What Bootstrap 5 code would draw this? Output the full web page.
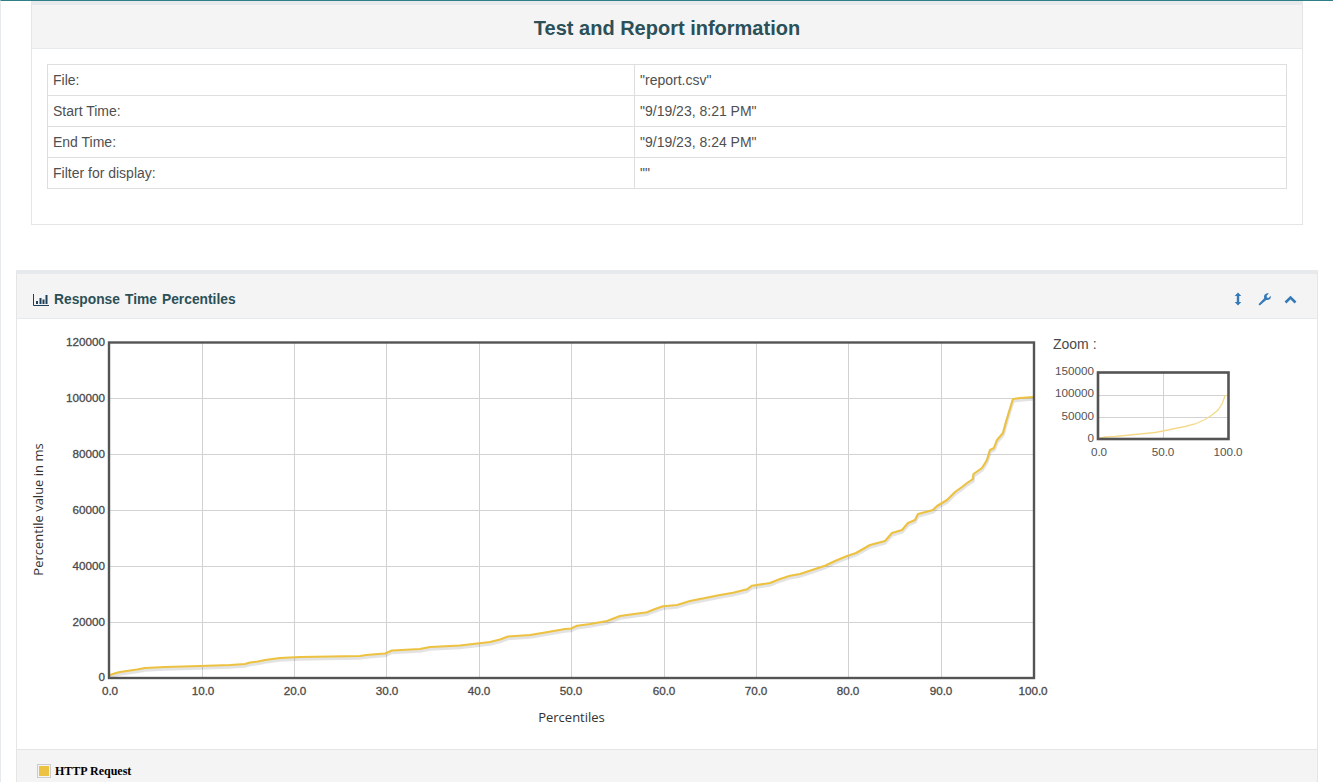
<!DOCTYPE html>
<html lang="en">
<head>
<meta charset="utf-8">
<link href="https://cdn.jsdelivr.net/npm/bootstrap@5.3.0/dist/css/bootstrap.min.css" rel="stylesheet">
<style>
html,body{height:782px;overflow:hidden}
body{background:#fff;border-top:1px solid #2f7f86;border-left:1px solid #e7eaec;font-family:"Liberation Sans",Arial,sans-serif;font-size:14px;color:#4f4f4f}
.wrap{padding:0 15px 0 15px}
.ibox{background:#fff;border:1px solid #e3e5e7;border-top:4px solid #e7eaec;border-radius:0}
.ibox-title{background:#f4f4f4;border-bottom:1px solid #e7eaec}
.info{margin:0 15px 45px 15px;}
.info .ibox-title{height:44px;padding-top:2px;display:flex;align-items:center;justify-content:center}
.info h2{margin:0;font-size:20px;font-weight:700;color:#2b5058;line-height:1}
.info .body{padding:15px 15px 35px}
.info table{margin:0;table-layout:fixed;--bs-table-border-color:#dedede;--bs-table-color:#4f4f4f}
.info td{height:31px;padding:5px;font-size:14px;line-height:20px;vertical-align:middle}
.info td:first-child{width:587px}
.chart .ibox-title{height:45px;padding:6px 14px 0 16px;display:flex;align-items:center;justify-content:space-between}
.chart h5{margin:0;font-size:13.800px;line-height:19px;font-weight:700;color:#2b5058;word-spacing:1.200px;display:flex;align-items:center;gap:5px;padding-top:1px}
.tools{display:flex;align-items:center}
.tools span{width:26px;display:flex;justify-content:center}
.chart .body{height:430px;display:flex;align-items:flex-start}
.zoomcol{padding:16px 0 0 0}
.zoomcol p{margin:0 0 7px;font-size:14px;line-height:18px;color:#4a4a4a}
.tick{font-family:"Liberation Sans",Arial,sans-serif;font-size:11.700px;fill:#4a4a4a;stroke:#4a4a4a;stroke-width:.3px}
.tick2{font-family:"Liberation Sans",Arial,sans-serif;font-size:11.700px;fill:#545454}
.axis{font-family:"Open Sans",sans-serif;font-size:13px;fill:#333}
.legend{background:#f4f4f4;border-top:1px solid #e3e5e7;height:40px;padding:12px 0 0 20px;display:flex;align-items:flex-start;gap:4px;font-family:"Liberation Serif",serif;font-weight:700;font-size:12px;line-height:18px;color:#000}
.swatch{width:14px;height:14px;border:1px solid #ccc;padding:1px;flex:none;margin-top:2px}
.swatch i{display:block;width:100%;height:100%;background:#edc240}
svg{display:block;flex:none}
</style>
</head>
<body>
<div class="wrap">
  <section class="ibox info">
    <div class="ibox-title"><h2>Test and Report information</h2></div>
    <div class="body">
      <table class="table table-bordered">
        <tbody>
          <tr><td>File:</td><td>"report.csv"</td></tr>
          <tr><td>Start Time:</td><td>"9/19/23, 8:21 PM"</td></tr>
          <tr><td>End Time:</td><td>"9/19/23, 8:24 PM"</td></tr>
          <tr><td>Filter for display:</td><td>""</td></tr>
        </tbody>
      </table>
    </div>
  </section>
  <section class="ibox chart">
    <div class="ibox-title">
      <h5><svg width="16" height="12" viewBox="0 0 16 12"><path d="M.5 0v11.500H16" fill="none" stroke="#1d3f5a" stroke-width="1"/><path d="M3 7h2v3H3zM6.500 4h2v6h-2zM9.500 5.500h2V10h-2zM12.500 1h2v9h-2z" fill="#1d3f5a"/></svg>Response Time Percentiles</h5>
      <div class="tools">
        <span><svg width="8" height="14" viewBox="0 0 8 14"><path d="M4 .5 7.300 4H5.200v6h2.100L4 13.500.7 10h2.100V4H.7z" fill="#337ab7"/></svg></span>
        <span><svg width="13" height="13" viewBox="0 0 13 13"><path d="M1.800 12.500.5 11.200l5.700-5.900C5.700 3.500 6.200 1.900 7.500 1c1-.7 2.200-.8 3.300-.4L8.600 2.800l.3 1.700 1.700.4 2-2.200c.4 1.200.2 2.500-.7 3.400-1 1-2.400 1.200-3.700.8z" fill="#337ab7"/></svg></span>
        <span><svg width="13" height="9" viewBox="0 0 13 9"><path d="M1.500 7.500 6.500 2.500l5 5" fill="none" stroke="#337ab7" stroke-width="2.600"/></svg></span>
      </div>
    </div>
    <div class="body">
      <svg width="1036" height="430" viewBox="17 319 1036 430">
        <defs><polyline id="curve" fill="none" points="110,675 113,674 116,673 120,672 130,670.500 137,669.500 145,668 165,667 200,666 230,665 245,664 250,662.500 258,661.500 265,660 280,658 300,657 330,656.500 360,656 366,655 372,654.500 385,653.500 392,650.500 420,649 430,647 460,645.500 490,642 500,639.500 508,636.500 530,635 545,632.500 565,629 571,628.500 577,625.700 590,624 607,621 620,616 634,614 647,612.300 655,609 663,606.300 677,605 690,601 705,598 720,595 733,592.700 747,589.300 752,585.700 770,583 780,579 790,575.700 800,574 812,570 825,565.700 835,561 847,556 856,553 863,549 870,545 885,541 892,533 902,530 908,523 915,520 918,514 933,510 937,506 947,500 955,492 962,487 967,483 973,479 973.500,474 982,468 987,460 990,450 994,448 997,440 1003,433 1006,422 1009,412 1013,399 1020,398 1033,397"/></defs>
        <g stroke="#d2d2d2" stroke-width="1" shape-rendering="crispEdges">
          <path d="M202.500 343V678M294.500 343V678M386.500 343V678M479.500 343V678M571.500 343V678M664.500 343V678M756.500 343V678M848.500 343V678M941.500 343V678"/>
          <path d="M110 398.500H1033M110 454.500H1033M110 510.500H1033M110 566.500H1033M110 622.500H1033"/>
        </g>
        <use href="#curve" stroke="#000" stroke-opacity=".11" stroke-width="3.500" transform="translate(0 2)"/>
        <use href="#curve" stroke="#edc240" stroke-width="2.100" stroke-linejoin="round"/>
        <rect x="109" y="342.500" width="925" height="335.500" fill="none" stroke="#545454" stroke-width="2.400"/>
        <g class="tick" text-anchor="end">
          <text x="105" y="346">120000</text><text x="105" y="402">100000</text><text x="105" y="458">80000</text><text x="105" y="514">60000</text><text x="105" y="570">40000</text><text x="105" y="626">20000</text><text x="105" y="681">0</text>
        </g>
        <g class="tick" text-anchor="middle">
          <text x="110" y="695">0.0</text><text x="203" y="695">10.0</text><text x="295" y="695">20.0</text><text x="387" y="695">30.0</text><text x="479" y="695">40.0</text><text x="571" y="695">50.0</text><text x="664" y="695">60.0</text><text x="756" y="695">70.0</text><text x="848" y="695">80.0</text><text x="941" y="695">90.0</text><text x="1033" y="695">100.0</text>
        </g>
        <text class="axis" x="571.500" y="722" text-anchor="middle">Percentiles</text>
        <text class="axis" transform="translate(43 509.500) rotate(-90)" text-anchor="middle">Percentile value in ms</text>
      </svg>
      <div class="zoomcol">
        <p>Zoom :</p>
        <svg width="200" height="100" viewBox="1053 360 200 100">
          <g stroke="#d2d2d2" shape-rendering="crispEdges"><path d="M1163.500 373V438M1098 395.500H1228M1098 417.500H1228"/></g>
          <polyline fill="none" stroke="#f5d98b" stroke-width="1.300" points="1099,438.500 1105,437 1115,436.500 1125,435.500 1135,434.500 1145,433.500 1155,432.500 1163,431 1175,428.500 1185,426.500 1195,424 1205,419.500 1212,415 1218,410 1222,404 1225,396 1228,395"/>
          <rect x="1098" y="372.500" width="130.500" height="66.500" fill="none" stroke="#545454" stroke-width="2.600"/>
          <g class="tick2" text-anchor="end"><text x="1094" y="375">150000</text><text x="1094" y="397">100000</text><text x="1094" y="420">50000</text><text x="1094" y="442">0</text></g>
          <g class="tick2" text-anchor="middle"><text x="1099" y="456">0.0</text><text x="1163" y="456">50.0</text><text x="1228" y="456">100.0</text></g>
        </svg>
      </div>
    </div>
    <div class="legend"><span class="swatch"><i></i></span><span>HTTP Request</span></div>
  </section>
</div>
</body>
</html>
